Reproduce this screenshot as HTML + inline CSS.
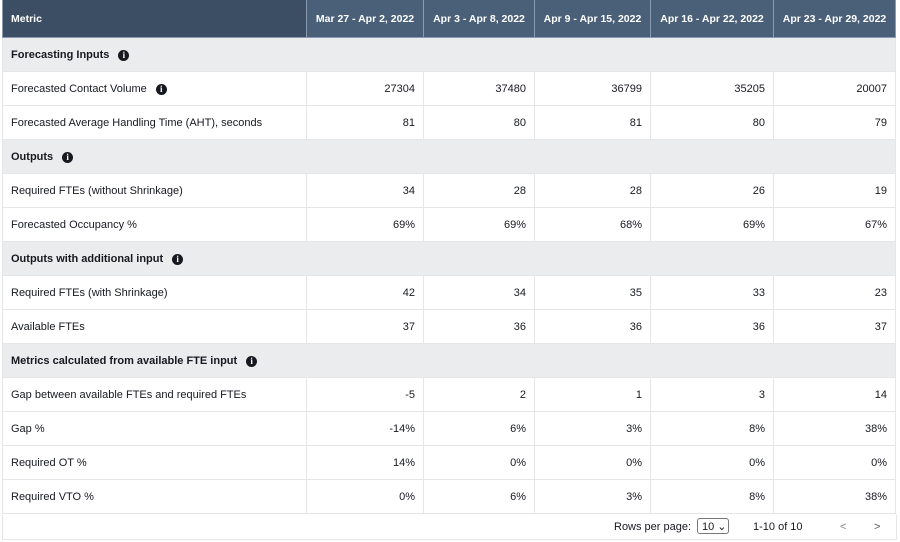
<!DOCTYPE html><html><head><style>
body{margin:0;width:900px;height:542px;background:#fff;font-family:"Liberation Sans",sans-serif;font-size:11px;color:#16191f;overflow:hidden}
table{border-collapse:collapse;position:absolute;left:2px;top:0;width:893px;table-layout:fixed}
td,th{height:33px;border:1px solid #e4e6e8;padding:0 8px;white-space:nowrap}
th{height:37px;background:#4a6079;color:#fff;font-weight:bold;font-size:10.5px;text-align:center;border:1px solid #8a9bb0;border-top:none;padding:0 4px}
th.m{background:#3c4e63;text-align:left;padding:0 8px}
td{text-align:right}
td.l{text-align:left}
tr.s td{background:#eaeced;font-weight:bold;text-align:left}
.i{display:inline-block;width:11px;height:11px;border-radius:50%;background:#16191f;color:#fff;font-size:9px;line-height:11px;text-align:center;font-weight:bold;margin-left:9px;vertical-align:0;font-family:"Liberation Serif",serif}
.f{position:absolute;top:515px;left:2px;width:893px;height:24px;border:1px solid #e4e6e8;border-top:none;font-size:11px}
.f span{position:absolute;top:6px}
.sel{position:absolute;left:694px;top:3px;width:32px;height:16px;border:1px solid #777;border-radius:3px;font-size:11px;line-height:16px;padding-left:4px;box-sizing:border-box}
</style></head><body>
<table>
<colgroup><col style="width:304px"><col style="width:117px"><col style="width:111px"><col style="width:116px"><col style="width:123px"><col style="width:122px"></colgroup>
<tr><th class="m">Metric</th><th>Mar 27 - Apr 2, 2022</th><th>Apr 3 - Apr 8, 2022</th><th>Apr 9 - Apr 15, 2022</th><th>Apr 16 - Apr 22, 2022</th><th>Apr 23 - Apr 29, 2022</th></tr>
<tr class="s"><td colspan="6">Forecasting Inputs<span class="i">i</span></td></tr>
<tr><td class="l">Forecasted Contact Volume<span class="i">i</span></td><td>27304</td><td>37480</td><td>36799</td><td>35205</td><td>20007</td></tr>
<tr><td class="l">Forecasted Average Handling Time (AHT), seconds</td><td>81</td><td>80</td><td>81</td><td>80</td><td>79</td></tr>
<tr class="s"><td colspan="6">Outputs<span class="i">i</span></td></tr>
<tr><td class="l">Required FTEs (without Shrinkage)</td><td>34</td><td>28</td><td>28</td><td>26</td><td>19</td></tr>
<tr><td class="l">Forecasted Occupancy %</td><td>69%</td><td>69%</td><td>68%</td><td>69%</td><td>67%</td></tr>
<tr class="s"><td colspan="6">Outputs with additional input<span class="i">i</span></td></tr>
<tr><td class="l">Required FTEs (with Shrinkage)</td><td>42</td><td>34</td><td>35</td><td>33</td><td>23</td></tr>
<tr><td class="l">Available FTEs</td><td>37</td><td>36</td><td>36</td><td>36</td><td>37</td></tr>
<tr class="s"><td colspan="6">Metrics calculated from available FTE input<span class="i">i</span></td></tr>
<tr><td class="l">Gap between available FTEs and required FTEs</td><td>-5</td><td>2</td><td>1</td><td>3</td><td>14</td></tr>
<tr><td class="l">Gap %</td><td>-14%</td><td>6%</td><td>3%</td><td>8%</td><td>38%</td></tr>
<tr><td class="l">Required OT %</td><td>14%</td><td>0%</td><td>0%</td><td>0%</td><td>0%</td></tr>
<tr><td class="l">Required VTO %</td><td>0%</td><td>6%</td><td>3%</td><td>8%</td><td>38%</td></tr>
</table>
<div class="f"><span style="left:611px">Rows per page:</span><div class="sel">10 ⌄</div><span style="left:750px">1-10 of 10</span><span style="left:837px;color:#888">&lt;</span><span style="left:871px;color:#555">&gt;</span></div>
</body></html>
